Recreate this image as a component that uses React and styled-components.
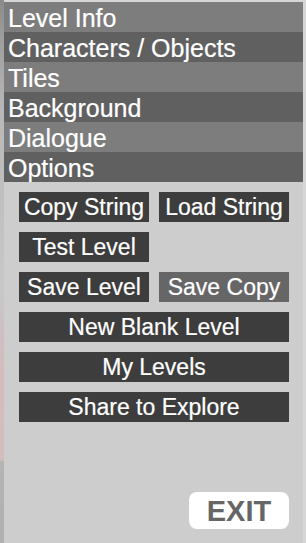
import React from "react"
import styled, { createGlobalStyle } from "styled-components"

const GlobalStyle = createGlobalStyle`
  html, body {
    margin: 0;
    padding: 0;
    height: 100%;
    overflow: hidden;
  }
  body {
    font-family: "Liberation Sans", Arial, sans-serif;
    background: #d4d4d4;
  }
  #root {
    height: 100%;
  }
`

const tabs = ["Level Info", "Characters / Objects", "Tiles", "Background", "Dialogue", "Options"]

const Screen = styled.div`
  display: flex;
  height: 543px;
  width: 306px;
  background: #d6d6d6;
`

const Backdrop = styled.div`
  width: 4px;
  flex: none;
  background: linear-gradient(
    to bottom,
    #8a8a8a 0px,
    #9a9a9a 30px,
    #b8b8b8 110px,
    #c8c8c8 290px,
    #cdbfc2 330px,
    #d3bcbe 370px,
    #d2bdbd 460px,
    #b4b4b4 462px,
    #b0b0b0 543px
  );
`

const Panel = styled.div`
  width: 299px;
  flex: none;
  margin-top: 2px;
  background: #cdcdcd;
  display: flex;
  flex-direction: column;
`

const Tab = styled.div`
  height: 30px;
  line-height: 32px;
  padding-left: 4px;
  font-size: 25px;
  color: #fff;
  -webkit-text-stroke: 0.2px #fff;
  background: ${p => (p.$dark ? "#606060" : "#7d7d7d")};
  white-space: nowrap;
  overflow: hidden;
`

const Body = styled.div`
  flex: 1;
  display: flex;
  flex-direction: column;
  padding: 10px 14px 14px 15px;
`

const Grid = styled.div`
  display: grid;
  grid-template-columns: 130px 130px;
  column-gap: 10px;
  row-gap: 10px;
`

const Button = styled.div`
  height: 30px;
  line-height: 31px;
  text-align: center;
  font-size: 23px;
  color: #fff;
  -webkit-text-stroke: 0.2px #fff;
  background: ${p => (p.$faded ? "#666666" : "#3d3d3d")};
  grid-column: ${p => (p.$wide ? "1 / span 2" : "auto")};
  white-space: nowrap;
  overflow: hidden;
`

const Spacer = styled.div``

const Footer = styled.div`
  margin-top: auto;
  display: flex;
  justify-content: flex-end;
`

const Exit = styled.div`
  width: 100px;
  height: 37px;
  line-height: 38px;
  border-radius: 8px;
  background: #fff;
  color: #666;
  font-size: 29px;
  font-weight: bold;
  text-align: center;
`

export default function App() {
  return (
    <>
      <GlobalStyle />
      <Screen>
        <Backdrop />
        <Panel>
          {tabs.map((t, i) => (
            <Tab key={t} $dark={i % 2 === 1}>
              {t}
            </Tab>
          ))}
          <Body>
            <Grid>
              <Button>Copy String</Button>
              <Button>Load String</Button>
              <Button>Test Level</Button>
              <Spacer />
              <Button>Save Level</Button>
              <Button $faded>Save Copy</Button>
              <Button $wide>New Blank Level</Button>
              <Button $wide>My Levels</Button>
              <Button $wide>Share to Explore</Button>
            </Grid>
            <Footer>
              <Exit>EXIT</Exit>
            </Footer>
          </Body>
        </Panel>
      </Screen>
    </>
  )
}
